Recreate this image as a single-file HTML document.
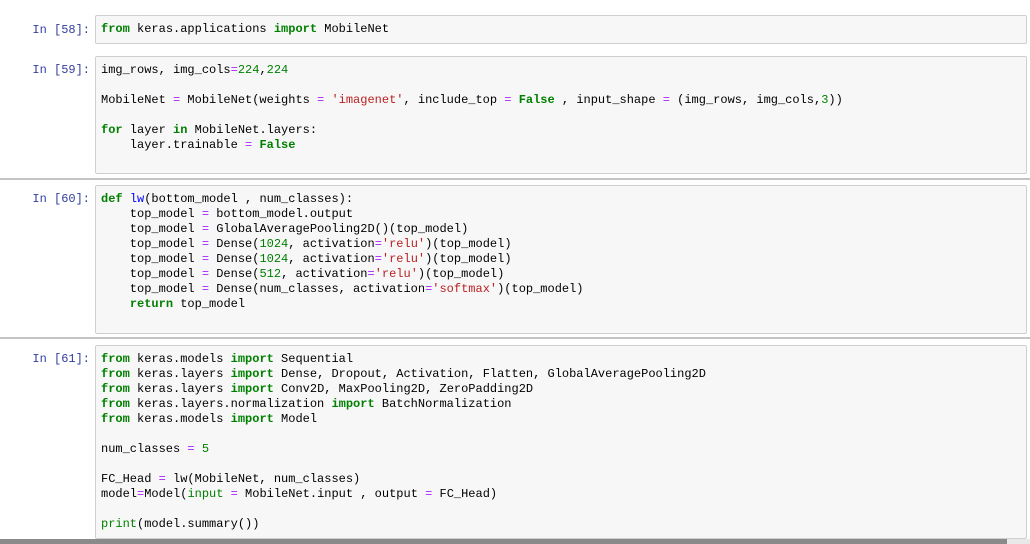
<!DOCTYPE html>
<html><head><meta charset="utf-8"><style>
body{margin:0;width:1030px;height:544px;background:#fff;position:relative;overflow:hidden;font-family:"Liberation Mono",monospace;font-size:12px;}
.p{position:absolute;left:0;width:90px;text-align:right;color:#303F9F;line-height:15px;}
.b{position:absolute;left:95px;width:930px;background:#f7f7f7;border:1px solid #cfcfcf;border-radius:2px;}
pre{margin:0;padding:6px 0 0 5px;font:inherit;line-height:15px;color:#000;white-space:pre;}
.k{color:#008000;font-weight:bold}.o{color:#AA22FF}.s{color:#BA2121}.n{color:#008000}.f{color:#0000FF}.bi{color:#008000}
.sep{position:absolute;left:0;width:1030px;height:2px;background:#c4c4c4;}
</style></head><body>
<div class="p" style="top:23px">In [58]:</div>
<div class="b" style="top:15px;height:27px"><pre><span class="k">from</span> keras.applications <span class="k">import</span> MobileNet</pre></div>

<div class="p" style="top:63px">In [59]:</div>
<div class="b" style="top:56px;height:116px"><pre>img_rows, img_cols<span class="o">=</span><span class="n">224</span>,<span class="n">224</span>

MobileNet <span class="o">=</span> MobileNet(weights <span class="o">=</span> <span class="s">'imagenet'</span>, include_top <span class="o">=</span> <span class="k">False</span> , input_shape <span class="o">=</span> (img_rows, img_cols,<span class="n">3</span>))

<span class="k">for</span> layer <span class="k">in</span> MobileNet.layers:
    layer.trainable <span class="o">=</span> <span class="k">False</span></pre></div>

<div class="sep" style="top:178px"></div>

<div class="p" style="top:192px">In [60]:</div>
<div class="b" style="top:185px;height:147px"><pre><span class="k">def</span> <span class="f">lw</span>(bottom_model , num_classes):
    top_model <span class="o">=</span> bottom_model.output
    top_model <span class="o">=</span> GlobalAveragePooling2D()(top_model)
    top_model <span class="o">=</span> Dense(<span class="n">1024</span>, activation<span class="o">=</span><span class="s">'relu'</span>)(top_model)
    top_model <span class="o">=</span> Dense(<span class="n">1024</span>, activation<span class="o">=</span><span class="s">'relu'</span>)(top_model)
    top_model <span class="o">=</span> Dense(<span class="n">512</span>, activation<span class="o">=</span><span class="s">'relu'</span>)(top_model)
    top_model <span class="o">=</span> Dense(num_classes, activation<span class="o">=</span><span class="s">'softmax'</span>)(top_model)
    <span class="k">return</span> top_model</pre></div>

<div class="sep" style="top:337px"></div>

<div class="p" style="top:352px">In [61]:</div>
<div class="b" style="top:345px;height:192px"><pre><span class="k">from</span> keras.models <span class="k">import</span> Sequential
<span class="k">from</span> keras.layers <span class="k">import</span> Dense, Dropout, Activation, Flatten, GlobalAveragePooling2D
<span class="k">from</span> keras.layers <span class="k">import</span> Conv2D, MaxPooling2D, ZeroPadding2D
<span class="k">from</span> keras.layers.normalization <span class="k">import</span> BatchNormalization
<span class="k">from</span> keras.models <span class="k">import</span> Model

num_classes <span class="o">=</span> <span class="n">5</span>

FC_Head <span class="o">=</span> lw(MobileNet, num_classes)
model<span class="o">=</span>Model(<span class="bi">input</span> <span class="o">=</span> MobileNet.input , output <span class="o">=</span> FC_Head)

<span class="bi">print</span>(model.summary())</pre></div>

<div style="position:absolute;left:0;top:539px;width:1007px;height:5px;background:#8a8a8a"></div>
<div style="position:absolute;left:1007px;top:539px;width:23px;height:5px;background:#e8e8e8"></div>
</body></html>
